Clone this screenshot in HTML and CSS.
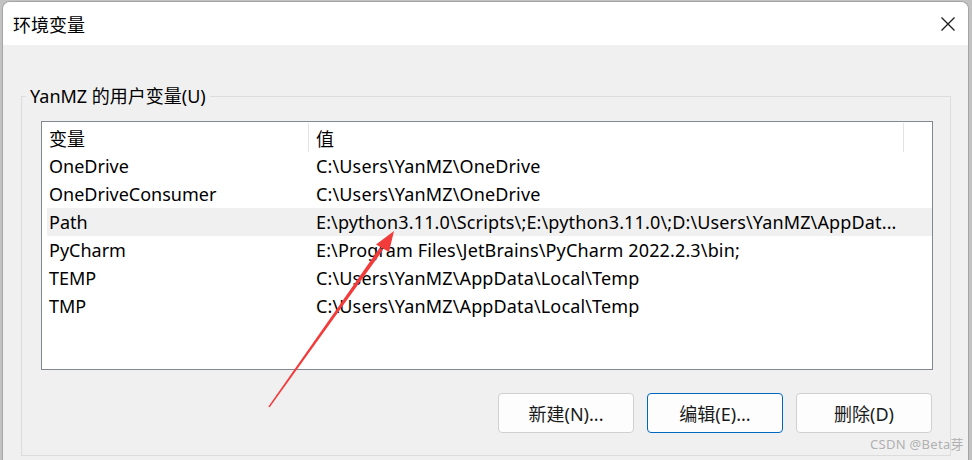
FILE: index.html
```html
<!DOCTYPE html>
<html lang="zh-CN">
<head>
<meta charset="utf-8">
<title>环境变量</title>
<link rel="stylesheet" href="styles.css">
</head>
<body>
<div class="window">
  <div class="titlebar">
    <span class="title">环境变量</span>
    <svg class="close" width="16" height="16" viewBox="0 0 16 16"><path d="M1.5 1.5 L14.5 14.5 M14.5 1.5 L1.5 14.5" stroke="#1a1a1a" stroke-width="1.3" fill="none"/></svg>
  </div>
  <div class="content">
    <fieldset class="group">
      <legend class="legend">YanMZ 的用户变量(U)</legend>
      <div class="list">
        <div class="header">
          <div class="hcell c1">变量</div>
          <div class="hcell c2">值</div>
        </div>
        <div class="row"><div class="cell c1">OneDrive</div><div class="cell c2">C:\Users\YanMZ\OneDrive</div></div>
        <div class="row"><div class="cell c1">OneDriveConsumer</div><div class="cell c2">C:\Users\YanMZ\OneDrive</div></div>
        <div class="row selected"><div class="cell c1">Path</div><div class="cell c2">E:\python3.11.0\Scripts\;E:\python3.11.0\;D:\Users\YanMZ\AppDat...</div></div>
        <div class="row"><div class="cell c1">PyCharm</div><div class="cell c2">E:\Program Files\JetBrains\PyCharm 2022.2.3\bin;</div></div>
        <div class="row"><div class="cell c1">TEMP</div><div class="cell c2">C:\Users\YanMZ\AppData\Local\Temp</div></div>
        <div class="row"><div class="cell c1">TMP</div><div class="cell c2">C:\Users\YanMZ\AppData\Local\Temp</div></div>
      </div>
      <div class="buttons">
        <button class="btn">新建(N)...</button>
        <button class="btn primary">编辑(E)...</button>
        <button class="btn">删除(D)</button>
      </div>
    </fieldset>
  </div>
</div>
<svg class="arrow" width="972" height="460" viewBox="0 0 972 460">
  <polygon points="269.7,407.3 268.3,406.7 379.7,247.7 382.9,250.1" fill="#f23b3b"/>
  <polygon points="394,231 389,252 376,244.5" fill="#f23b3b"/>
</svg>
<div class="watermark">CSDN @Beta芽</div>
</body>
</html>
```
FILE: styles.css
```css
* { box-sizing: border-box; }
html, body { margin: 0; padding: 0; }
body {
  width: 972px;
  height: 460px;
  background: #c2c2c2;
  overflow: hidden;
  position: relative;
  font-family: "Noto Sans", "Noto Sans CJK SC", sans-serif;
  color: #000;
}
.window {
  margin: 1px 3px 0 2px;
  height: 459px;
  background: #f0f0f0;
  border: 1px solid #a5a5a5;
  border-bottom: none;
  border-radius: 8px 8px 0 0;
  overflow: hidden;
  display: flex;
  flex-direction: column;
}
.titlebar {
  height: 43px;
  background: #fff;
  display: flex;
  align-items: center;
  justify-content: space-between;
  padding: 0 12px 0 10px;
  flex: none;
}
.title {
  font-family: "Noto Sans CJK SC", sans-serif;
  font-size: 18px;
  line-height: 24px;
}
.close { display: block; margin-top: 1px; }
.content {
  padding: 39px 17px 0 18px;
}
.group {
  margin: 0;
  padding: 0 17px 22px 19px;
  border: 1px solid #dcdcdc;
  min-width: 0;
}
.legend {
  margin-left: -15px;
  padding: 0 4px;
  font-size: 18px;
  line-height: 24px;
}
.list {
  margin-top: 13px;
  height: 249px;
  border: 1px solid #828790;
  background: #fff;
  padding-left: 5px;
  font-size: 18px;
}
.header, .row {
  display: grid;
  grid-template-columns: 262px 595px;
}
.header { height: 30px; }
.row { height: 28px; }
.selected { background: #f0f0f0; }
.hcell, .cell {
  display: flex;
  align-items: center;
  white-space: nowrap;
  overflow: hidden;
}
.hcell {
  font-family: "Noto Sans CJK SC", sans-serif;
  border-right: 1px solid #e3e3e3;
  margin: 1px 0 0;
}
.c1 { padding-left: 2px; }
.c2 { padding-left: 7px; padding-right: 2px; }
.cell.c2 { letter-spacing: 0.14px; }
.buttons {
  margin-top: 23px;
  display: flex;
  justify-content: flex-end;
  gap: 13px;
  padding-right: 1px;
}
.btn {
  width: 136px;
  height: 40px;
  background: #fdfdfd;
  border: 1px solid #d0d0d0;
  border-radius: 4px;
  font-family: "Noto Sans", "Noto Sans CJK SC", sans-serif;
  font-size: 18px;
  color: #1a1a1a;
  padding: 0;
}
.btn.primary { border-color: #0067c0; }
.arrow {
  position: absolute;
  left: 0;
  top: 0;
  pointer-events: none;
}
.watermark {
  position: absolute;
  left: 870px;
  top: 435px;
  font-size: 13px;
  line-height: 18px;
  color: #b0b0b0;
  letter-spacing: 0.3px;
}
```
